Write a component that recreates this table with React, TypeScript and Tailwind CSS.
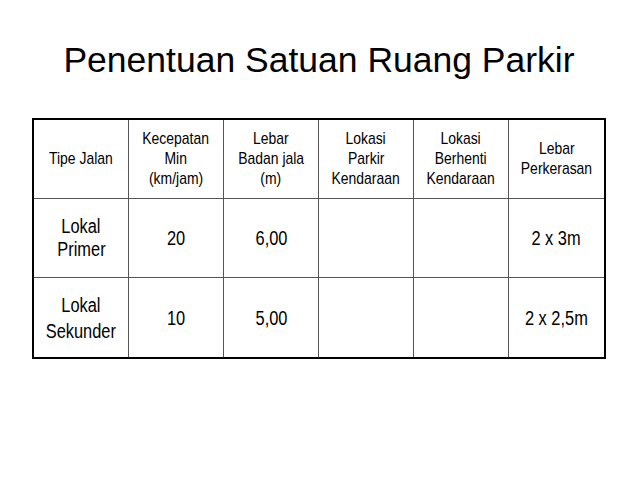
import React from "react";

// Arial Narrow isn't installed, so the table text is Liberation Sans squeezed horizontally
const cellFont = "font-['Liberation_Sans',Arial,sans-serif]";

const headers = [
  ["Tipe Jalan"],
  ["Kecepatan", "Min", "(km/jam)"],
  ["Lebar", "Badan jala", "(m)"],
  ["Lokasi", "Parkir", "Kendaraan"],
  ["Lokasi", "Berhenti", "Kendaraan"],
  ["Lebar", "Perkerasan"],
];

const rows = [
  [["Lokal", "Primer"], ["20"], ["6,00"], [], [], ["2 x 3m"]],
  [["Lokal", "Sekunder"], ["10"], ["5,00"], [], [], ["2 x 2,5m"]],
];

export default function App() {
  return (
    <div className="w-[638px] h-[478px] bg-white text-black overflow-hidden">
      {/* Slide title */}
      <div className="h-[118px] pt-[43px]">
        <h1 className="text-center text-[35.5px] leading-[35px] font-['Liberation_Sans',Arial,sans-serif]">
          Penentuan Satuan Ruang Parkir
        </h1>
      </div>

      {/* Table */}
      <div className={`mx-[32px] border-2 border-black ${cellFont}`}>
        <div className="grid grid-cols-6">
          {headers.map((lines, i) => (
            <div
              key={i}
              className={`h-[79px] flex flex-col items-center justify-center text-center text-[17px] leading-[20px] border-b border-[#555] ${
                i < 5 ? "border-r" : ""
              }`}
            >
              {lines.map((l) => (
                <span key={l} className="whitespace-nowrap scale-x-[0.82]">
                  {l}
                </span>
              ))}
            </div>
          ))}
          {rows.map((row, r) =>
            row.map((lines, i) => (
              <div
                key={`${r}-${i}`}
                className={`h-[79px] flex flex-col items-center justify-center text-center text-[20px] border-[#555] ${
                  i < 5 ? "border-r" : ""
                } ${r === 0 ? "border-b leading-[23px]" : "leading-[26px]"}`}
              >
                {lines.map((l) => (
                  <span key={l} className="whitespace-nowrap scale-x-[0.82]">
                    {l}
                  </span>
                ))}
              </div>
            ))
          )}
        </div>
      </div>
    </div>
  );
}
